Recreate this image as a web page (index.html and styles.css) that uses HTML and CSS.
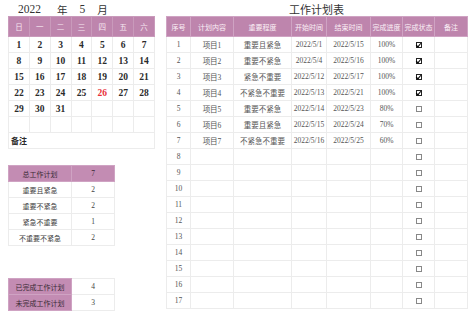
FILE: index.html
```html
<!DOCTYPE html>
<html lang="zh">
<head>
<meta charset="utf-8">
<link rel="stylesheet" href="styles.css">
</head>
<body>
<div class="page">
  <div class="left">
    <div class="cal-title">
      <span class="yr">2022</span><span class="nian">年</span><span class="mo">5</span><span class="yue">月</span>
    </div>
    <table class="cal">
      <colgroup><col><col><col><col><col><col><col></colgroup>
      <tr class="hd"><th>日</th><th>一</th><th>二</th><th>三</th><th>四</th><th>五</th><th>六</th></tr>
      <tr><td>1</td><td>2</td><td>3</td><td>4</td><td>5</td><td>6</td><td>7</td></tr>
      <tr><td>8</td><td>9</td><td>10</td><td>11</td><td>12</td><td>13</td><td>14</td></tr>
      <tr><td>15</td><td>16</td><td>17</td><td>18</td><td>19</td><td>20</td><td>21</td></tr>
      <tr><td>22</td><td>23</td><td>24</td><td>25</td><td class="today">26</td><td>27</td><td>28</td></tr>
      <tr><td>29</td><td>30</td><td>31</td><td></td><td></td><td></td><td></td></tr>
      <tr><td></td><td></td><td></td><td></td><td></td><td></td><td></td></tr>
      <tr><td colspan="7" class="note">备注</td></tr>
    </table>

    <table class="sum sum1">
      <colgroup><col class="c1"><col class="c2"></colgroup>
      <tr class="hd"><td>总工作计划</td><td>7</td></tr>
      <tr><td>重要且紧急</td><td>2</td></tr>
      <tr><td>重要不紧急</td><td>2</td></tr>
      <tr><td>紧急不重要</td><td>1</td></tr>
      <tr><td>不重要不紧急</td><td>2</td></tr>
    </table>

    <table class="sum sum2">
      <colgroup><col class="c1"><col class="c2"></colgroup>
      <tr><td class="lab">已完成工作计划</td><td>4</td></tr>
      <tr><td class="lab">未完成工作计划</td><td>3</td></tr>
    </table>
  </div>

  <div class="right">
    <div class="main-title">工作计划表</div>
    <table class="plan">
      <colgroup>
        <col class="w24"><col class="w43"><col class="w58"><col class="w35">
        <col class="w44"><col class="w32"><col class="w32"><col class="w33">
      </colgroup>
      <tr class="hd"><th>序号</th><th>计划内容</th><th>重要程度</th><th>开始时间</th><th>结束时间</th><th>完成进度</th><th>完成状态</th><th>备注</th></tr>
      <tr><td>1</td><td>项目1</td><td>重要且紧急</td><td>2022/5/1</td><td>2022/5/15</td><td>100%</td><td><span class="cb on"></span></td><td></td></tr>
      <tr><td>2</td><td>项目2</td><td>重要不紧急</td><td>2022/5/4</td><td>2022/5/16</td><td>100%</td><td><span class="cb on"></span></td><td></td></tr>
      <tr><td>3</td><td>项目3</td><td>紧急不重要</td><td>2022/5/12</td><td>2022/5/17</td><td>100%</td><td><span class="cb on"></span></td><td></td></tr>
      <tr><td>4</td><td>项目4</td><td>不紧急不重要</td><td>2022/5/13</td><td>2022/5/21</td><td>100%</td><td><span class="cb on"></span></td><td></td></tr>
      <tr><td>5</td><td>项目5</td><td>重要不紧急</td><td>2022/5/14</td><td>2022/5/23</td><td>80%</td><td><span class="cb"></span></td><td></td></tr>
      <tr><td>6</td><td>项目6</td><td>重要且紧急</td><td>2022/5/15</td><td>2022/5/24</td><td>70%</td><td><span class="cb"></span></td><td></td></tr>
      <tr><td>7</td><td>项目7</td><td>不紧急不重要</td><td>2022/5/16</td><td>2022/5/25</td><td>60%</td><td><span class="cb"></span></td><td></td></tr>
      <tr><td>8</td><td></td><td></td><td></td><td></td><td></td><td><span class="cb"></span></td><td></td></tr>
      <tr><td>9</td><td></td><td></td><td></td><td></td><td></td><td><span class="cb"></span></td><td></td></tr>
      <tr><td>10</td><td></td><td></td><td></td><td></td><td></td><td><span class="cb"></span></td><td></td></tr>
      <tr><td>11</td><td></td><td></td><td></td><td></td><td></td><td><span class="cb"></span></td><td></td></tr>
      <tr><td>12</td><td></td><td></td><td></td><td></td><td></td><td><span class="cb"></span></td><td></td></tr>
      <tr><td>13</td><td></td><td></td><td></td><td></td><td></td><td><span class="cb"></span></td><td></td></tr>
      <tr><td>14</td><td></td><td></td><td></td><td></td><td></td><td><span class="cb"></span></td><td></td></tr>
      <tr><td>15</td><td></td><td></td><td></td><td></td><td></td><td><span class="cb"></span></td><td></td></tr>
      <tr><td>16</td><td></td><td></td><td></td><td></td><td></td><td><span class="cb"></span></td><td></td></tr>
      <tr><td>17</td><td></td><td></td><td></td><td></td><td></td><td><span class="cb"></span></td><td></td></tr>
    </table>
  </div>
</div>
</body>
</html>
```
FILE: styles.css
```css
* { box-sizing: border-box; }
html, body { margin: 0; padding: 0; background: #fff; }
body {
  font-family: "Liberation Serif", "Noto Sans CJK SC", serif;
  color: #333;
}
.page {
  display: flex;
  align-items: flex-start;
  padding-left: 8px;
  gap: 11px;
}
.left { width: 147px; display: flex; flex-direction: column; }
.right { width: 301px; display: flex; flex-direction: column; }

table { border-collapse: collapse; table-layout: fixed; }
td, th { padding: 0; overflow: hidden; white-space: nowrap; text-align: center; font-weight: normal; }

/* calendar title */
.cal-title {
  height: 16px;
  display: flex;
  align-items: center;
  padding-left: 10px;
  padding-top: 2px;
  font-size: 11.5px;
  color: #333;
}
.cal-title .nian { margin-left: 16px; font-family: "Noto Sans CJK SC", sans-serif; font-size: 10.5px; }
.cal-title .mo { margin-left: 12px; }
.cal-title .yue { margin-left: 12px; font-family: "Noto Sans CJK SC", sans-serif; font-size: 10.5px; }

/* calendar */
.cal { width: 147px; border: 1px solid #c594b8; }
.cal td, .cal th { border: 1px solid #ececec; height: 16px; }
.cal .hd th {
  height: 20px;
  background: #be85ad;
  color: #f6e8f1;
  border-color: #c99abb;
  font-family: "Noto Sans CJK SC", sans-serif;
  font-size: 7.5px;
}
.cal td { font-size: 9.5px; font-weight: bold; color: #2a2a2a; }
.cal td.today { color: #e8303a; }
.cal td.note {
  text-align: left;
  padding-left: 2px;
  font-family: "Noto Sans CJK SC", sans-serif;
  font-size: 8px;
  font-weight: bold;
}

/* summary tables */
.sum { width: 106px; border: 1px solid #c594b8; }
.sum .c1 { width: 63px; }
.sum .c2 { width: 43px; }
.sum td {
  height: 16px;
  border: 1px solid #ececec;
  font-size: 7px;
  color: #444;
  font-family: "Noto Sans CJK SC", sans-serif;
}
.sum td:last-child { font-family: "Liberation Serif", serif; font-size: 7.5px; }
.sum1 { margin-top: 16px; }
.sum2 { margin-top: 32px; }
.sum .hd td { background: #c38cb3; border-color: #cfa3c3; color: #3a2a35; }
.sum td.lab { background: #c38cb3; border-color: #cfa3c3; color: #3a2a35; }

/* main table */
.main-title {
  height: 16px;
  text-align: center;
  font-family: "Noto Sans CJK SC", sans-serif;
  font-size: 11px;
  line-height: 18px;
  color: #333;
}
.plan { width: 301px; border: 1px solid #c594b8; }
.plan .w24 { width: 24px; }
.plan .w43 { width: 43px; }
.plan .w58 { width: 58px; }
.plan .w35 { width: 35px; }
.plan .w44 { width: 44px; }
.plan .w32 { width: 32px; }
.plan .w33 { width: 33px; }
.plan th, .plan td { border: 1px solid #ececec; height: 16px; }
.plan .hd th {
  height: 20px;
  background: #be85ad;
  color: #fbf0f6;
  border-color: #cfa3c3;
  font-family: "Noto Sans CJK SC", sans-serif;
  font-size: 7px;
}
.plan td {
  font-size: 7.5px;
  color: #555;
  font-family: "Liberation Serif", "Noto Sans CJK SC", serif;
}

/* checkbox */
.cb {
  display: inline-block;
  width: 6px;
  height: 6px;
  border: 1px solid #888;
  vertical-align: middle;
  position: relative;
}
.cb.on {
  border-color: #222;
  background: #fff;
}
.cb.on::after {
  content: "";
  position: absolute;
  left: 0px;
  top: -1px;
  width: 2px;
  height: 4px;
  border-right: 1.5px solid #000;
  border-bottom: 1.5px solid #000;
  transform: rotate(40deg);
}
```
